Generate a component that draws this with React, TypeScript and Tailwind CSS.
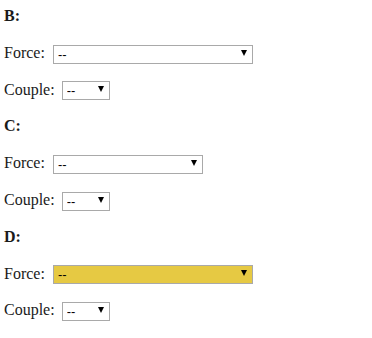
import React from 'react';

type Row = { label: string; width: string; gap: string; highlight?: boolean };

const sections: { name: string; force: Row; couple: Row }[] = [
  {
    name: 'B',
    force: { label: 'Force:', width: 'w-[200px]', gap: 'gap-2' },
    couple: { label: 'Couple:', width: 'w-[48px]', gap: 'gap-[7px]' },
  },
  {
    name: 'C',
    force: { label: 'Force:', width: 'w-[150px]', gap: 'gap-2' },
    couple: { label: 'Couple:', width: 'w-[48px]', gap: 'gap-[7px]' },
  },
  {
    name: 'D',
    force: { label: 'Force:', width: 'w-[200px]', gap: 'gap-2', highlight: true },
    couple: { label: 'Couple:', width: 'w-[48px]', gap: 'gap-[7px]' },
  },
];

function Dropdown({ width, highlight }: { width: string; highlight?: boolean }) {
  return (
    <div className={`relative h-[19px] ${width}`}>
      <select
        defaultValue="--"
        className={`h-full w-full appearance-none border border-[#a9a9a9] pl-[4px] pr-4 text-[13px] leading-[17px] text-black outline-none ${
          highlight ? 'bg-[#e6c943]' : 'bg-white'
        }`}
        style={{ fontFamily: '"Liberation Sans", Arial, sans-serif' }}
      >
        <option value="--">--</option>
      </select>
      <span className="pointer-events-none absolute right-[6px] top-[6px] h-0 w-0 border-x-[3.5px] border-t-[6px] border-x-transparent border-t-black" />
    </div>
  );
}

function Field({ row }: { row: Row }) {
  return (
    <div className={`flex h-[20.8px] items-center ${row.gap}`}>
      <span>{row.label}</span>
      <Dropdown width={row.width} highlight={row.highlight} />
    </div>
  );
}

export default function App() {
  return (
    <div
      className="flex min-h-[338px] w-[372px] flex-col gap-4 bg-white pl-[4px] pt-[6px] text-[16px] leading-[20.8px] text-[#1a1a1a]"
      style={{ fontFamily: '"Liberation Serif", "Times New Roman", serif' }}
    >
      {sections.map((s) => (
        <React.Fragment key={s.name}>
          <div className="h-[20.8px] font-bold">{s.name}:</div>
          <Field row={s.force} />
          <Field row={s.couple} />
        </React.Fragment>
      ))}
    </div>
  );
}
